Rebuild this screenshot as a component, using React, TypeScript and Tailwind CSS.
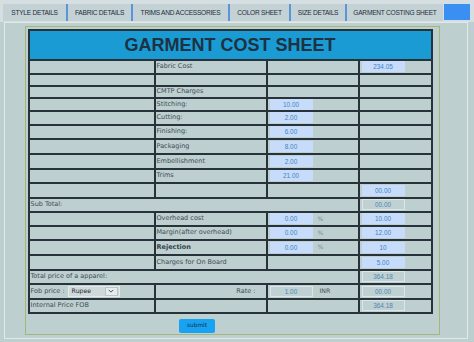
import React from 'react';

// Garment cost sheet – static recreation of the costing tab
const line = 'border-[#27323a]';

const tabs = [
  { label: 'STYLE DETAILS', w: 'w-[63px]', first: true },
  { label: 'FABRIC DETAILS', w: 'w-[65px]' },
  { label: 'TRIMS AND ACCESSORIES', w: 'w-[97px]' },
  { label: 'COLOR SHEET', w: 'w-[61px]' },
  { label: 'SIZE DETAILS', w: 'w-[56px]' },
  { label: 'GARMENT COSTING SHEET', w: 'w-[98px]' },
];

const Inp: React.FC<{ value: string; ro?: boolean }> = ({ value, ro }) => (
  <input
    readOnly
    value={value}
    className={
      'w-[43px] h-[11px] ml-[2px] px-0 text-center text-[6.4px] font-["Liberation_Sans",sans-serif] outline-none ' +
      (ro
        ? 'bg-[#bfd1d2] border border-[#dbe6e7] text-[#4f86b3]'
        : 'bg-[#c7dcfa] border-0 text-[#4284c2]')
    }
  />
);

const Row: React.FC<{ h: string; children: React.ReactNode }> = ({ h, children }) => (
  <div className={`flex border-t-2 ${line} ${h}`}>{children}</div>
);

const C1: React.FC<{ children?: React.ReactNode; span?: boolean }> = ({ children, span }) => (
  <div className={`${span ? 'w-[328px]' : 'w-[124px]'} flex items-center pl-[1px]`}>{children}</div>
);
const C2: React.FC<{ children?: React.ReactNode; right?: boolean }> = ({ children, right }) => (
  <div className={`w-[112px] border-l-2 ${line} flex items-center ${right ? 'justify-end pr-[10px]' : 'pl-[1px]'}`}>
    {children}
  </div>
);
const C3: React.FC<{ children?: React.ReactNode }> = ({ children }) => (
  <div className={`w-[92px] border-l-2 ${line} flex items-center`}>{children}</div>
);
const C4: React.FC<{ children?: React.ReactNode }> = ({ children }) => (
  <div className={`w-[73px] border-l-2 ${line} flex items-center`}>{children}</div>
);

const Pct = () => <span className="ml-[5px] text-[6px] text-[#6f8ea3]">%</span>;

const App: React.FC = () => {
  return (
    <div className="w-[474px] h-[342px] bg-[#bdcfcf] overflow-hidden font-['DejaVu_Sans',sans-serif]">
      {/* tab strip */}
      <div className="h-[22px] bg-[#d5dfe2] flex pl-[3px] pt-[4px]">
        {tabs.map((t) => (
          <div
            key={t.label}
            className={`${t.w} h-[17px] bg-[#c4d2d6] flex items-center justify-center text-[6.6px] text-[#1e2c36] font-['Liberation_Sans',sans-serif] tracking-[-0.25px] ${
              t.first ? '' : 'border-l-2 border-[#5a95d8]'
            }`}
          >
            {t.label}
          </div>
        ))}
        <div className="w-[26px] h-[16px] ml-[1px] bg-[#3b8ff2]" />
      </div>

      <div className="ml-[4px] w-[464px] h-[317px] border border-[#e1e9e9] pt-[3px]">
        <div className="ml-[20px] w-[415px] h-[309px] border-[1.5px] border-[#a5b67b]">
          <div className={`ml-[1.5px] mt-[1.5px] w-[405px] border-2 ${line} text-[6.5px] leading-none text-[#3f4d55]`}>
            <div className="h-[28px] bg-[#1b9bd4] flex items-center justify-center">
              <span className="text-[18px] font-bold text-[#1d3242] font-['Liberation_Sans',sans-serif]">
                GARMENT COST SHEET
              </span>
            </div>

            <Row h="h-[14px]">
              <C1 /><C2>Fabric Cost</C2><C3 /><C4><Inp value="234.05" /></C4>
            </Row>
            <Row h="h-[12px]">
              <C1 /><C2 /><C3 /><C4 />
            </Row>
            <Row h="h-[12px]">
              <C1 /><C2>CMTP Charges</C2><C3 /><C4 />
            </Row>
            <Row h="h-[13px]">
              <C1 /><C2>Stitching:</C2><C3><Inp value="10.00" /></C3><C4 />
            </Row>
            <Row h="h-[14px]">
              <C1 /><C2>Cutting:</C2><C3><Inp value="2.00" /></C3><C4 />
            </Row>
            <Row h="h-[14px]">
              <C1 /><C2>Finishing:</C2><C3><Inp value="6.00" /></C3><C4 />
            </Row>
            <Row h="h-[15px]">
              <C1 /><C2>Packaging</C2><C3><Inp value="8.00" /></C3><C4 />
            </Row>
            <Row h="h-[15px]">
              <C1 /><C2>Embellishment</C2><C3><Inp value="2.00" /></C3><C4 />
            </Row>
            <Row h="h-[14px]">
              <C1 /><C2>Trims</C2><C3><Inp value="21.00" /></C3><C4 />
            </Row>
            <Row h="h-[15px]">
              <C1 /><C2 /><C3 /><C4><Inp value="00.00" /></C4>
            </Row>
            <Row h="h-[14px]">
              <C1 span>Sub Total:</C1><C4><Inp value="00.00" ro /></C4>
            </Row>
            <Row h="h-[14px]">
              <C1 /><C2>Overhead cost</C2><C3><Inp value="0.00" /><Pct /></C3><C4><Inp value="10.00" /></C4>
            </Row>
            <Row h="h-[14px]">
              <C1 /><C2>Margin(after overhead)</C2><C3><Inp value="0.00" /><Pct /></C3><C4><Inp value="12.00" /></C4>
            </Row>
            <Row h="h-[15px]">
              <C1 />
              <C2><span className="font-bold text-[#35434b]">Rejection</span></C2>
              <C3><Inp value="0.00" /><Pct /></C3>
              <C4><Inp value="10" /></C4>
            </Row>
            <Row h="h-[15px]">
              <C1 /><C2>Charges for On Board</C2><C3 /><C4><Inp value="5.00" /></C4>
            </Row>
            <Row h="h-[14px]">
              <C1 span>Total price of a apparel:</C1><C4><Inp value="364.18" ro /></C4>
            </Row>
            <Row h="h-[15px]">
              <C1>
                <span>Fob price :</span>
                <div className="ml-[3px] w-[52px] h-[11px] bg-[#cfd9da] border border-[#e4eaea] flex items-center">
                  <span className="flex-1 pl-[3px] text-[6.2px] text-[#1f2a30]">Rupee</span>
                  <span className="w-[13px] h-[9px] mr-[1px] bg-[#e6ebee] border border-[#b8c4c8] flex items-center justify-center">
                    <svg viewBox="0 0 8 5" className="w-[6px] h-[4px]">
                      <path d="M1 1 L4 4 L7 1" fill="none" stroke="#3a4a55" strokeWidth="1.2" />
                    </svg>
                  </span>
                </div>
              </C1>
              <C2 right>Rate :</C2>
              <C3>
                <Inp value="1.00" ro />
                <span className="ml-[7px] text-[6.2px]">INR</span>
              </C3>
              <C4><Inp value="00.00" ro /></C4>
            </Row>
            <Row h="h-[14px]">
              <C1>Internal Price FOB</C1><C2 /><C3 /><C4><Inp value="364.18" ro /></C4>
            </Row>
          </div>

          <button className="ml-[153px] mt-[5px] w-[36px] h-[14px] rounded-[2px] bg-[#17a2f2] text-[5.8px] text-[#163049] flex items-center justify-center">
            submit
          </button>
        </div>
      </div>
    </div>
  );
};

export default App;
